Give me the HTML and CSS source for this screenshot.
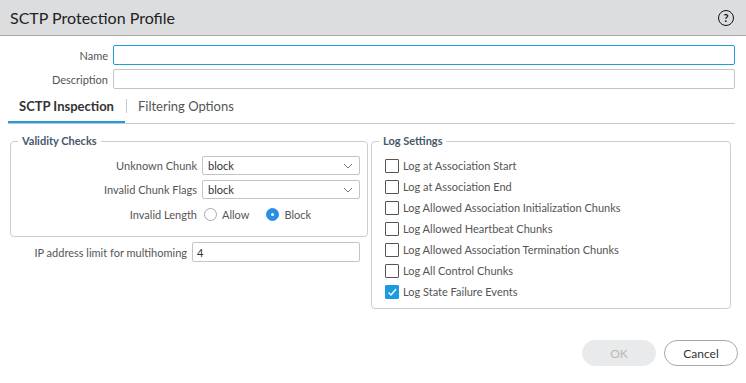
FILE: index.html
```html
<!DOCTYPE html>
<html>
<head>
<meta charset="utf-8">
<link rel="stylesheet" href="styles.css">
</head>
<body>
<div class="dialog">
  <div class="header">
    <span class="title">SCTP Protection Profile</span>
    <span class="help">?</span>
  </div>
  <div class="body">
    <div class="top-rows">
      <label class="lbl">Name</label>
      <div class="input focus"></div>
      <label class="lbl">Description</label>
      <div class="input"></div>
    </div>
    <div class="tabs">
      <div class="tab active">SCTP Inspection</div>
      <div class="sep"></div>
      <div class="tab">Filtering Options</div>
    </div>
    <div class="columns">
      <div class="left">
        <fieldset class="group">
          <legend>Validity Checks</legend>
          <div class="vgrid">
            <label class="lbl">Unknown Chunk</label>
            <div class="select"><span>block</span><svg width="10" height="6" viewBox="0 0 10 6"><path d="M1 1 L5 5 L9 1" fill="none" stroke="#777" stroke-width="1"/></svg></div>
            <label class="lbl">Invalid Chunk Flags</label>
            <div class="select"><span>block</span><svg width="10" height="6" viewBox="0 0 10 6"><path d="M1 1 L5 5 L9 1" fill="none" stroke="#777" stroke-width="1"/></svg></div>
            <label class="lbl">Invalid Length</label>
            <div class="radios">
              <span class="radio"></span><span class="rtext">Allow</span>
              <span class="radio on"></span><span class="rtext">Block</span>
            </div>
          </div>
        </fieldset>
        <div class="iprow">
          <label class="lbl">IP address limit for multihoming</label>
          <div class="input"><span>4</span></div>
        </div>
      </div>
      <fieldset class="group log">
        <legend>Log Settings</legend>
        <div class="checks">
          <div class="check"><span class="box"></span>Log at Association Start</div>
          <div class="check"><span class="box"></span>Log at Association End</div>
          <div class="check"><span class="box"></span>Log Allowed Association Initialization Chunks</div>
          <div class="check"><span class="box"></span>Log Allowed Heartbeat Chunks</div>
          <div class="check"><span class="box"></span>Log Allowed Association Termination Chunks</div>
          <div class="check"><span class="box"></span>Log All Control Chunks</div>
          <div class="check"><span class="box on"><svg width="12" height="12" viewBox="0 0 12 12"><path d="M2.5 6.5 L5 9 L10 3" fill="none" stroke="#fff" stroke-width="1.3"/></svg></span>Log State Failure Events</div>
        </div>
      </fieldset>
    </div>
    <div class="footer">
      <button class="btn ok">OK</button>
      <button class="btn cancel">Cancel</button>
    </div>
  </div>
</div>
</body>
</html>
```
FILE: styles.css
```css
* { box-sizing: border-box; }
html, body { margin: 0; padding: 0; background: #fff; }
body { font-family: Lato, "Open Sans", sans-serif; font-size: 11px; color: #333; width: 746px; height: 383px; overflow: hidden; }
.dialog { width: 746px; height: 383px; display: flex; flex-direction: column; }
.header { height: 36px; background: #dcdddf; border-bottom: 1px solid #a9a9a9; display: flex; align-items: center; justify-content: space-between; padding: 0 12px 0 10px; }
.title { font-size: 16px; color: #222; }
.help { width: 16px; height: 16px; border: 1.4px solid #111; border-radius: 50%; display: flex; align-items: center; justify-content: center; font-size: 11px; font-weight: bold; color: #111; line-height: 1; }
.body { padding: 9px 11px 0 8px; display: flex; flex-direction: column; flex: 1; }
.lbl { color: #555; text-align: right; white-space: nowrap; }
.top-rows { display: grid; grid-template-columns: 100px 1fr; column-gap: 5px; row-gap: 4px; align-items: center; }
.input { height: 20px; border: 1px solid #c4c4c4; border-radius: 2px; background: #fff; padding: 0 6px; display: flex; align-items: center; color: #333; }
.input.focus { border-color: #1b9ee0; }
.tabs { margin-top: 0; display: flex; align-items: center; height: 35px; border-bottom: 1px solid #c8c8c8; }
.tab { font-size: 13px; color: #555; padding: 0 11px; height: 100%; display: flex; align-items: center; }
.tab.active { font-weight: bold; color: #333; border-bottom: 2px solid #1b9ee0; padding: 2px 11px 0 11px; }
.sep { width: 1px; height: 14px; background: #c8c8c8; margin: 0 0 0 1px; }
.columns { display: grid; grid-template-columns: 358px 360px; column-gap: 3px; margin-top: 10px; padding-left: 2px; align-items: start; }
.group { margin: 0; padding: 0; border: 1px solid #cdcdcd; border-radius: 4px; min-width: 0; }
.group legend { font-weight: bold; color: #46586a; padding: 0 4px; margin-left: 7px; font-size: 11px; line-height: 14px; }
.vgrid { display: grid; grid-template-columns: 1fr 158px; column-gap: 5px; row-gap: 5px; padding: 8px 7px 12px 0; align-items: center; }
.select { height: 19px; border: 1px solid #c4c4c4; border-radius: 2px; display: flex; align-items: center; justify-content: space-between; padding: 0 6px 0 5px; }
.radios { display: flex; align-items: center; height: 20px; padding-left: 2px; }
.radio { width: 13px; height: 13px; border: 1px solid #a8a8a8; border-radius: 50%; display: inline-block; }
.radio.on { background: #2b8ee6; border-color: #2b8ee6; position: relative; }
.radio.on::after { content: ""; position: absolute; left: 4px; top: 4px; width: 3px; height: 3px; background: #fff; border-radius: 50%; }
.rtext { color: #555; margin-left: 5px; margin-right: 17px; }
.iprow { display: grid; grid-template-columns: 1fr 168px; column-gap: 5px; align-items: center; margin-top: 5px; padding-right: 8px; }
.iprow .input { height: 20px; padding-left: 4px; }
.checks { display: flex; flex-direction: column; padding: 7px 0 6px 13px; }
.check { height: 21px; display: flex; align-items: center; color: #555; }
.box { width: 14px; height: 14px; border: 1px solid #555; border-radius: 1px; margin-right: 4px; display: flex; align-items: center; justify-content: center; }
.box.on { background: #1e9be0; border-color: #1e9be0; }
.footer { margin-top: auto; display: flex; justify-content: flex-end; gap: 8px; padding-bottom: 17px; margin-right: -3px; }
.btn { width: 74px; height: 26px; border-radius: 13px; font-family: Lato, sans-serif; font-size: 12px; }
.ok { background: #e9eaeb; border: 1px solid #e9eaeb; color: #b8b8b8; }
.cancel { background: #fff; border: 1px solid #a8a8a8; color: #333; }
```
